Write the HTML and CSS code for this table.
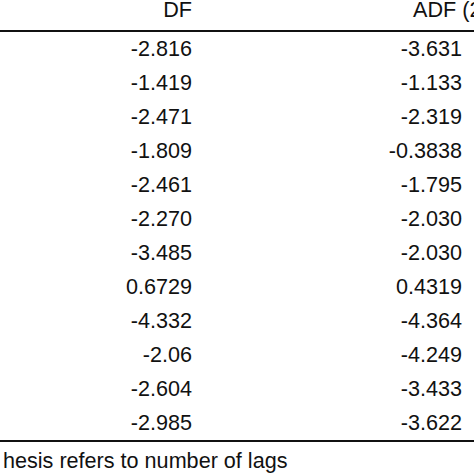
FILE: index.html
```html
<!DOCTYPE html>
<html>
<head>
<meta charset="utf-8">
<link rel="stylesheet" href="styles.css">
</head>
<body>
<div class="page">
  <div class="head">
    <div class="c1">DF</div>
    <div class="c2 adf">ADF (2)</div>
  </div>
  <div class="rule"></div>
  <div class="rows">
    <div class="row"><div class="c1">-2.816</div><div class="c2">-3.631</div></div>
    <div class="row"><div class="c1">-1.419</div><div class="c2">-1.133</div></div>
    <div class="row"><div class="c1">-2.471</div><div class="c2">-2.319</div></div>
    <div class="row"><div class="c1">-1.809</div><div class="c2">-0.3838</div></div>
    <div class="row"><div class="c1">-2.461</div><div class="c2">-1.795</div></div>
    <div class="row"><div class="c1">-2.270</div><div class="c2">-2.030</div></div>
    <div class="row"><div class="c1">-3.485</div><div class="c2">-2.030</div></div>
    <div class="row"><div class="c1">0.6729</div><div class="c2">0.4319</div></div>
    <div class="row"><div class="c1">-4.332</div><div class="c2">-4.364</div></div>
    <div class="row"><div class="c1">-2.06</div><div class="c2">-4.249</div></div>
    <div class="row"><div class="c1">-2.604</div><div class="c2">-3.433</div></div>
    <div class="row"><div class="c1">-2.985</div><div class="c2">-3.622</div></div>
  </div>
  <div class="rule"></div>
  <p class="note">hesis refers to number of lags</p>
</div>
</body>
</html>
```
FILE: styles.css
```css
html, body {
  margin: 0;
  padding: 0;
  background: #fff;
  overflow: hidden;
}
.page {
  width: 474px;
  height: 474px;
  overflow: hidden;
  font-family: "Liberation Sans", Arial, Helvetica, sans-serif;
  font-size: 21.6px;
  color: #111;
}
.head {
  display: flex;
  height: 30px;
  line-height: 20px;
  white-space: nowrap;
}
.row {
  display: flex;
  height: 34px;
  line-height: 34px;
  white-space: nowrap;
}
.c1 {
  width: 192px;
  flex: none;
  text-align: right;
}
.c2 {
  width: 270px;
  flex: none;
  text-align: right;
}
.head .adf {
  text-align: left;
  padding-left: 221px;
  box-sizing: border-box;
  width: 282px;
}
.rule {
  height: 2px;
  background: #111;
}
.note {
  margin: 0;
  padding: 6px 0 0 3px;
  white-space: nowrap;
}
```
